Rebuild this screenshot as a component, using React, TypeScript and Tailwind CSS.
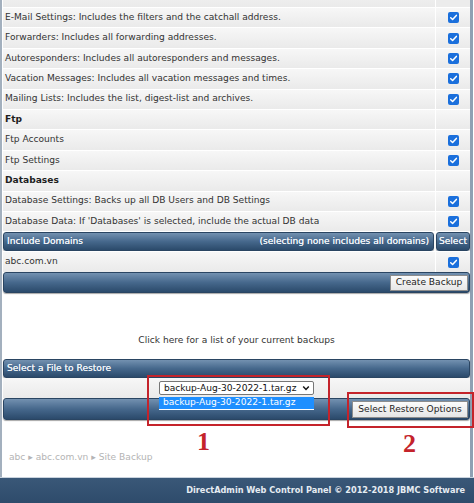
import React from "react";

const font = { fontFamily: '"DejaVu Sans", Verdana, sans-serif' };

function Check() {
  return (
    <span className="inline-flex h-[11px] w-[11px] items-center justify-center rounded-[2px] bg-[#1a6fdc]">
      <svg viewBox="0 0 12 12" className="h-[9px] w-[9px]">
        <path d="M2.3 6.3 L4.8 8.7 L9.8 3.2" fill="none" stroke="#fff" strokeWidth="2" strokeLinecap="round" strokeLinejoin="round" />
      </svg>
    </span>
  );
}

function Row({ label, bold, checked = true, h = "h-[20.4px]" }: { label?: string; bold?: boolean; checked?: boolean; h?: string }) {
  return (
    <div className={`flex ${h} border-t border-white`}>
      <div className={`flex flex-1 items-center bg-linear-to-b from-[#f7f7f7] to-[#eaeaea] pl-[2px] text-[9.1px] ${bold ? "font-bold text-[#1e1e1e]" : "text-[#333]"}`}>
        {label}
      </div>
      <div className="flex w-[35px] items-center justify-center border-l border-white bg-linear-to-b from-[#f7f7f7] to-[#eaeaea]">
        {checked && label && !bold ? <Check /> : null}
      </div>
    </div>
  );
}

const bar = "bg-linear-to-b from-[#7391b0] via-[#46688c] to-[#2b4a6b] border border-[#2a4562] rounded-[3px] shadow-[0_1px_1px_rgba(0,0,0,0.35)]";
const headText = "text-[9.1px] text-[#eef3f8] [text-shadow:0_0_0.4px_#ffffff]";

export default function App() {
  return (
    <div className="relative h-[503px] w-[474px] overflow-hidden bg-white" style={font}>
      <div className="flex h-[477px] flex-col border-l-[2px] border-r-[3px] border-l-[#a3b0be] border-r-[#8fa0b3] pl-[1px] mr-[1px]">
        <div className="flex h-[7px]">
          <div className="flex-1 bg-linear-to-b from-[#eeeeee] to-[#eaeaea]" />
          <div className="w-[35px] border-l border-white bg-[#ececec]" />
        </div>
        <Row label="E-Mail Settings: Includes the filters and the catchall address." />
        <Row label="Forwarders: Includes all forwarding addresses." />
        <Row label="Autoresponders: Includes all autoresponders and messages." />
        <Row label="Vacation Messages: Includes all vacation messages and times." />
        <Row label="Mailing Lists: Includes the list, digest-list and archives." />
        <Row label="Ftp" bold />
        <Row label="Ftp Accounts" />
        <Row label="Ftp Settings" />
        <Row label="Databases" bold />
        <Row label="Database Settings: Backs up all DB Users and DB Settings" />
        <Row label="Database Data: If 'Databases' is selected, include the actual DB data" />

        <div className="flex h-[19.6px] gap-[2px] pt-[1px]">
          <div className={`flex flex-1 items-center justify-between px-[3px] ${headText} ${bar}`}>
            <span>Include Domains</span>
            <span className="pr-[1px]">(selecting none includes all domains)</span>
          </div>
          <div className={`flex w-[34px] items-center justify-center ${headText} ${bar}`}>Select</div>
        </div>
        <Row label="abc.com.vn" h="h-[21.5px]" />

        <div className={`flex h-[21px] items-center justify-end pr-[1px] ${bar}`}>
          <div className="flex h-[16px] w-[78px] items-center justify-center border border-[#8d8d8d] bg-linear-to-b from-[#fbfbfb] to-[#e6e6e6] text-[9.1px] text-[#1d1d1d]">
            Create Backup
          </div>
        </div>

        <div className="flex h-[66px] items-end justify-center pb-[12px] text-[9.1px] text-[#333]">
          Click here for a list of your current backups
        </div>

        <div className={`flex h-[19px] items-center px-[3px] ${headText} ${bar}`}>
          Select a File to Restore
        </div>
        <div className="flex h-[20px] items-center justify-center bg-linear-to-b from-[#f7f7f7] to-[#eaeaea]">
          <div className="flex h-[14px] w-[155px] items-center justify-between rounded-[2px] border border-[#767676] bg-white pl-[4px] pr-[3px] text-[9.1px] text-[#111]">
            <span>backup-Aug-30-2022-1.tar.gz</span>
            <svg viewBox="0 0 10 10" className="h-[8px] w-[8px]">
              <path d="M1.5 3 L5 6.8 L8.5 3" fill="none" stroke="#111" strokeWidth="1.8" />
            </svg>
          </div>
        </div>
        <div className={`flex h-[22px] items-center justify-end pr-[1px] ${bar}`}>
          <div className="flex h-[17px] w-[116px] items-center justify-center border border-[#8d8d8d] bg-linear-to-b from-[#fbfbfb] to-[#e6e6e6] text-[9.1px] text-[#1d1d1d]">
            Select Restore Options
          </div>
        </div>

        <div className="flex flex-1 items-start pl-[6px] pt-[31px] text-[9.1px] text-[#b4b4b4]">
          abc ▸ abc.com.vn ▸ Site Backup
        </div>
      </div>

      <div
        className="flex h-[26px] items-center justify-end border-t border-[#c9d3de] bg-linear-to-b from-[#3a5878] to-[#2e4b6b] pr-[9px] text-[9.1px] font-bold text-[#e6ecf2]"
        style={{ fontFamily: '"DejaVu Sans Condensed", "DejaVu Sans", sans-serif' }}
      >
        DirectAdmin Web Control Panel © 2012-2018 JBMC Software
      </div>

      {/* dropdown option overlay */}
      <div className="absolute left-[159px] top-[397px] flex h-[13px] w-[155px] items-center border-b border-white bg-[#1e8fff] pl-[4px] text-[9.1px] text-white">
        backup-Aug-30-2022-1.tar.gz
      </div>

      {/* annotations */}
      <div className="pointer-events-none absolute left-[147px] top-[375px] h-[51px] w-[183px] border-2 border-[#c4232b]" />
      <div className="pointer-events-none absolute left-[347px] top-[392px] h-[36px] w-[127px] border-2 border-[#c4232b]" />
      <div className="absolute left-[197px] top-[429px] text-[26px] font-bold leading-none text-[#c4232b]" style={{ fontFamily: '"Liberation Serif", serif' }}>1</div>
      <div className="absolute left-[403px] top-[431px] text-[26px] font-bold leading-none text-[#c4232b]" style={{ fontFamily: '"Liberation Serif", serif' }}>2</div>
    </div>
  );
}
